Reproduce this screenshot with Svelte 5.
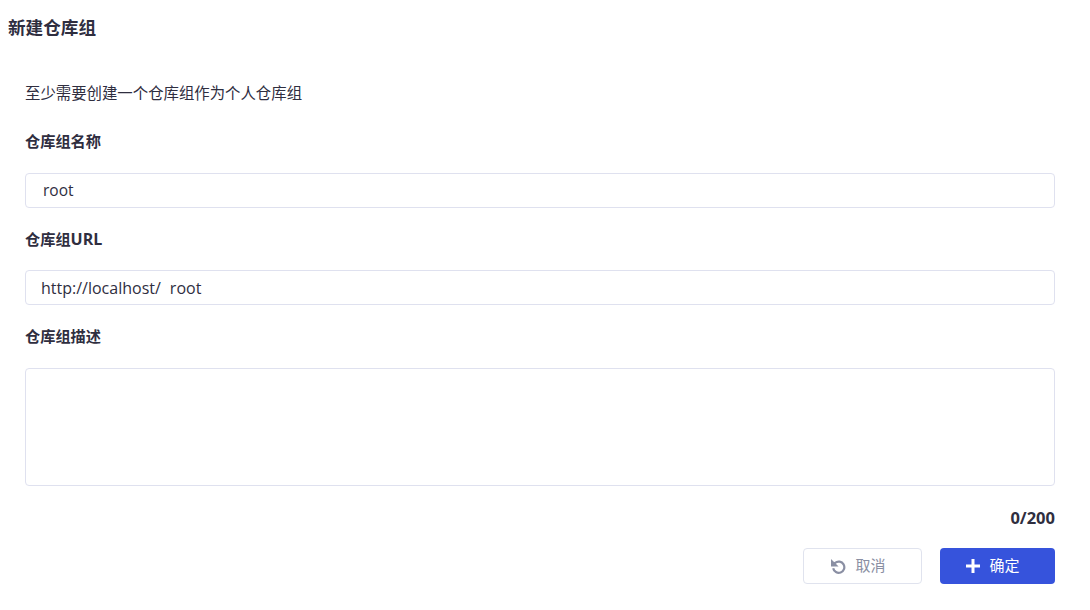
<script lang="ts">
	let name = $state("root");
	let description = $state("");
	const MAX_DESC = 200;
</script>

<div class="page">
	<h2 class="title">新建仓库组</h2>

	<form class="form" onsubmit={(e) => e.preventDefault()}>
		<p class="hint">至少需要创建一个仓库组作为个人仓库组</p>

		<div class="label">仓库组名称</div>
		<div class="field name-field">
			<input class="plain" bind:value={name} />
		</div>

		<div class="label">仓库组<span class="latin">URL</span></div>
		<div class="field url-field">
			<span class="prefix">http://localhost/</span>
			<span class="path">{name}</span>
		</div>

		<div class="label">仓库组描述</div>
		<textarea class="area" bind:value={description}></textarea>

		<div class="count">{description.length}/{MAX_DESC}</div>

		<div class="actions">
			<button type="button" class="btn cancel">
				<svg viewBox="0 0 16 17" width="16" height="17" aria-hidden="true">
					<path d="M3.2 10.2a5.6 5.6 0 1 0 1.9-5.3L2.6 7" fill="none" stroke="currentColor" stroke-width="2.2" />
					<path d="M1 1v7.6h7.6z" fill="currentColor" />
				</svg>
				<span>取消</span>
			</button>
			<button type="submit" class="btn ok">
				<svg viewBox="0 0 14 14" width="14" height="14" aria-hidden="true">
					<path d="M7 0v14M0 7h14" fill="none" stroke="currentColor" stroke-width="3" />
				</svg>
				<span>确定</span>
			</button>
		</div>
	</form>
</div>

<style>
	:global(body) {
		margin: 0;
		background: #fff;
	}

	.page {
		width: 1090px;
		height: 610px;
		box-sizing: border-box;
		padding-top: 16px;
		overflow: hidden;
		color: #2f2e3f;
		font-family: "Open Sans", "Noto Sans CJK SC", sans-serif;
		font-size: 15px;
	}

	.title {
		margin: 0 0 0 8px;
		font-size: 17.6px;
		line-height: 22px;
		font-weight: 700;
	}

	.form {
		display: flex;
		flex-direction: column;
		margin: 0 35px 0 25px;
		padding-top: 46px;
	}

	.hint {
		margin: 0;
		line-height: 20px;
		font-size: 15.4px;
	}

	.label {
		margin-top: 27px;
		line-height: 20px;
		font-size: 15.2px;
		font-weight: 700;
	}

	.latin {
		font-size: 16px;
	}

	.field {
		display: flex;
		align-items: center;
		box-sizing: border-box;
		height: 35px;
		margin-top: 22px;
		border: 1px solid #dfe1ef;
		border-radius: 4px;
		font-size: 15.5px;
	}

	.name-field {
		margin-bottom: -6px;
	}

	.url-field {
		margin-top: 21px;
		padding-left: 15px;
		font-size: 16px;
		margin-bottom: -6px;
	}

	.plain {
		flex: 1;
		border: 0;
		outline: 0;
		padding: 0 0 1px 17px;
		background: transparent;
		color: inherit;
		font: inherit;
	}

	.prefix {
		margin-right: 9px;
	}

	.area {
		display: block;
		box-sizing: border-box;
		height: 118px;
		margin-top: 22px;
		border: 1px solid #dfe1ef;
		border-radius: 4px;
		outline: 0;
		resize: none;
		font: inherit;
	}

	.count {
		margin-top: 22px;
		text-align: right;
		line-height: 20px;
		font-size: 16.5px;
		font-weight: 700;
	}

	.actions {
		display: flex;
		justify-content: flex-end;
		gap: 18px;
		margin-top: 20px;
	}

	.btn {
		display: flex;
		align-items: center;
		justify-content: center;
		gap: 9px;
		box-sizing: border-box;
		height: 36px;
		padding: 0 9px 0 0;
		border-radius: 4px;
		font: inherit;
		font-size: 15px;
	}

	.btn span {
		margin-bottom: 3px;
	}

	.cancel {
		width: 119px;
		border: 1px solid #e0e3ee;
		background: #fff;
		color: #8a8fa3;
	}

	.ok {
		width: 115px;
		border: 0;
		background: #3653dc;
		color: #fff;
	}
</style>
